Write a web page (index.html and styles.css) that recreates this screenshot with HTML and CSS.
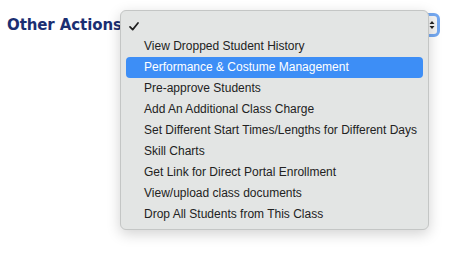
FILE: index.html
```html
<!DOCTYPE html>
<html>
<head>
<meta charset="utf-8">
<link rel="stylesheet" href="styles.css">
</head>
<body>
<div class="page">
  <div class="actions-row">
    <span class="label">Other Actions</span>
    <div class="select">
      <svg class="arrows" width="6" height="10" viewBox="0 0 6 10"><path d="M0.5 4 L3 1 L5.5 4 Z M0.5 6 L3 9 L5.5 6 Z" fill="#222"/></svg>
    </div>
  </div>
  <div class="menu">
    <div class="item checked">
      <svg class="check" width="10" height="9" viewBox="0 0 10 9"><path d="M1 4.8 L3.7 7.6 L9 1" fill="none" stroke="#1e1e1e" stroke-width="1.7" stroke-linecap="round" stroke-linejoin="round"/></svg>
    </div>
    <div class="item">View Dropped Student History</div>
    <div class="item active">Performance &amp; Costume Management</div>
    <div class="item">Pre-approve Students</div>
    <div class="item">Add An Additional Class Charge</div>
    <div class="item">Set Different Start Times/Lengths for Different Days</div>
    <div class="item">Skill Charts</div>
    <div class="item">Get Link for Direct Portal Enrollment</div>
    <div class="item">View/upload class documents</div>
    <div class="item">Drop All Students from This Class</div>
  </div>
</div>
</body>
</html>
```

FILE: styles.css
```css
html, body {
  margin: 0;
  padding: 0;
  background: #ffffff;
}
.page {
  position: relative;
  width: 459px;
  height: 253px;
  overflow: hidden;
}
.actions-row {
  display: flex;
  align-items: center;
  padding: 13px 0 0 7px;
  height: 24px;
}
.label {
  font-family: "DejaVu Sans", Verdana, sans-serif;
  font-weight: bold;
  font-size: 15px;
  letter-spacing: -0.1px;
  color: #1b2f72;
}
.select {
  margin-left: auto;
  margin-right: 19px;
  width: 30px;
  height: 24px;
  border: 3px solid #74a8f0;
  border-radius: 6px;
  background: #f4f4f4;
  display: flex;
  align-items: center;
  justify-content: flex-end;
  padding-right: 2px;
  box-sizing: border-box;
}
.menu {
  position: absolute;
  left: 120px;
  top: 10px;
  width: 309px;
  height: 220px;
  box-sizing: border-box;
  padding: 4px 5px 6px 5px;
  background: #e3e5e4;
  border: 1px solid #c4c6c5;
  border-radius: 6px;
  box-shadow: 0 4px 14px rgba(0, 0, 0, 0.18);
}
.item {
  height: 21px;
  line-height: 21px;
  padding-left: 18px;
  font-family: "Liberation Sans", Arial, sans-serif;
  font-size: 12px;
  color: #222222;
  white-space: nowrap;
  border-radius: 4px;
  position: relative;
}
.item.active {
  background: #3d8ef6;
  color: #ffffff;
}
.check {
  position: absolute;
  left: 3px;
  top: 7px;
}
```
